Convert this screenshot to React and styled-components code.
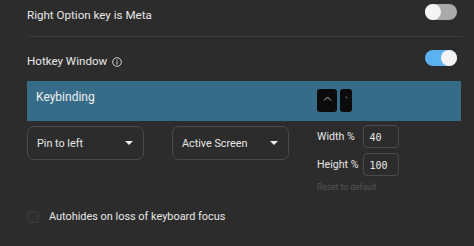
import React, { useState } from 'react';
import styled, { createGlobalStyle } from 'styled-components';

const GlobalStyle = createGlobalStyle`
    html, body {
        margin: 0;
        padding: 0;
        background: #2c2c2c;
    }
    body {
        font-family: Roboto, "Liberation Sans", Arial, sans-serif;
        color: #e8e8e8;
    }
`;

const Panel = styled.div`
    width: 474px;
    height: 246px;
    box-sizing: border-box;
    padding: 0 12px 0 27px;
    background: #2c2c2c;
    overflow: hidden;
`;

const SettingRow = styled.div`
    display: flex;
    align-items: flex-start;
    justify-content: space-between;
    box-sizing: border-box;
    height: ${(p) => p.height}px;
    padding: ${(p) => p.top}px 5px 0 0;
    border-bottom: ${(p) => (p.divider ? '1px solid #3a3a3a' : 'none')};
`;

const Label = styled.span`
    display: flex;
    align-items: center;
    gap: 5px;
    margin-top: ${(p) => p.offset}px;
    font-size: 11.6px;
    line-height: 15px;
    color: #e8e8e8;
`;

const Track = styled.div`
    width: 32px;
    height: 16px;
    border-radius: 8px;
    background: ${(p) => (p.on ? '#5ab3ef' : '#a9a9a9')};
    display: flex;
    align-items: center;
    justify-content: ${(p) => (p.on ? 'flex-end' : 'flex-start')};
    cursor: pointer;
`;

const Knob = styled.div`
    width: 16px;
    height: 16px;
    border-radius: 50%;
    background: #f4f4f4;
`;

const KeyBar = styled.div`
    display: grid;
    grid-template-columns: 281px auto;
    align-items: start;
    height: 40px;
    margin-right: 1px;
    padding: 8px 9px 0;
    box-sizing: border-box;
    background: #366c87;
    font-size: 12px;
    line-height: 16px;
    color: #f0f0f0;
`;

const Keys = styled.div`
    display: flex;
    gap: 3px;
`;

const Key = styled.div`
    width: ${(p) => p.width}px;
    height: 23px;
    border-radius: 3px;
    background: #0b0b0b;
    display: flex;
    justify-content: center;
    padding-top: 7px;
    box-sizing: border-box;
`;

const Options = styled.div`
    display: flex;
    align-items: flex-start;
    margin-top: 5px;
`;

const Select = styled.div`
    width: 117px;
    height: 34px;
    box-sizing: border-box;
    margin-right: ${(p) => p.gap}px;
    border: 1px solid #4a4a4a;
    border-radius: 7px;
    display: flex;
    align-items: center;
    justify-content: space-between;
    padding: 1px 10px 0 9px;
    font-size: 10.8px;
    color: #e8e8e8;
`;

const Caret = styled.span`
    width: 0;
    height: 0;
    border-left: 4px solid transparent;
    border-right: 4px solid transparent;
    border-top: 4px solid #eee;
    margin-top: -2px;
`;

const SizeFields = styled.div`
    display: grid;
    grid-template-columns: auto 36px;
    column-gap: 5px;
    row-gap: 5px;
    align-items: center;
    margin-top: -1px;
`;

const FieldLabel = styled.span`
    font-size: 10.6px;
    white-space: nowrap;
    color: #e8e8e8;
`;

const NumberBox = styled.div`
    width: 36px;
    height: 23px;
    box-sizing: border-box;
    border: 1px solid #4a4a4a;
    border-radius: 4px;
    padding: 1px 5px 0;
    display: flex;
    align-items: center;
    font-family: "DejaVu Sans Mono", "Liberation Mono", monospace;
    font-size: 10px;
    color: #e8e8e8;
`;

const Reset = styled.span`
    grid-column: 1 / 3;
    font-size: 8.5px;
    color: #555;
    margin-top: 1px;
`;

const CheckRow = styled.label`
    display: flex;
    align-items: center;
    gap: 10px;
    margin-top: 18px;
    font-size: 10.9px;
    color: #e8e8e8;
`;

const Box = styled.span`
    width: 12px;
    height: 12px;
    box-sizing: border-box;
    border: 1px solid #3e3e3e;
    border-radius: 3px;
    background: #303030;
`;

const InfoIcon = () => (
    <svg width="10" height="10" viewBox="0 0 12 12">
        <circle cx="6" cy="6" r="5.2" fill="none" stroke="#ddd" strokeWidth="1.1" />
        <circle cx="6" cy="3.5" r="0.8" fill="#ddd" />
        <path d="M6 5.2v3.8" stroke="#ddd" strokeWidth="1.2" />
    </svg>
);

const ControlGlyph = () => (
    <svg width="9" height="5" viewBox="0 0 9 5">
        <path d="M1 4.5L4.5 1L8 4.5" fill="none" stroke="#bbb" strokeWidth="1" />
    </svg>
);

const TickGlyph = () => (
    <svg width="3" height="3" viewBox="0 0 3 3">
        <path d="M0.8 0.5L2 2.5" stroke="#999" strokeWidth="0.9" />
    </svg>
);

const Toggle = ({ on }) => (
    <Track on={on ? 1 : 0}>
        <Knob />
    </Track>
);

const App = () => {
    const [width] = useState(40);
    const [height] = useState(100);

    return (
        <Panel>
            <GlobalStyle />
            <SettingRow height={37} top={4} divider>
                <Label offset={4}>Right Option key is Meta</Label>
                <Toggle on={false} />
            </SettingRow>
            <SettingRow height={44} top={13}>
                <Label offset={4}>
                    Hotkey Window <InfoIcon />
                </Label>
                <Toggle on />
            </SettingRow>
            <KeyBar>
                <span>Keybinding</span>
                <Keys>
                    <Key width={20}>
                        <ControlGlyph />
                    </Key>
                    <Key width={12}>
                        <TickGlyph />
                    </Key>
                </Keys>
            </KeyBar>
            <Options>
                <Select gap={28}>
                    Pin to left <Caret />
                </Select>
                <Select gap={28}>
                    Active Screen <Caret />
                </Select>
                <SizeFields>
                    <FieldLabel>Width %</FieldLabel>
                    <NumberBox>{width}</NumberBox>
                    <FieldLabel>Height %</FieldLabel>
                    <NumberBox>{height}</NumberBox>
                    <Reset>Reset to default</Reset>
                </SizeFields>
            </Options>
            <CheckRow>
                <Box />
                Autohides on loss of keyboard focus
            </CheckRow>
        </Panel>
    );
};

export default App;
